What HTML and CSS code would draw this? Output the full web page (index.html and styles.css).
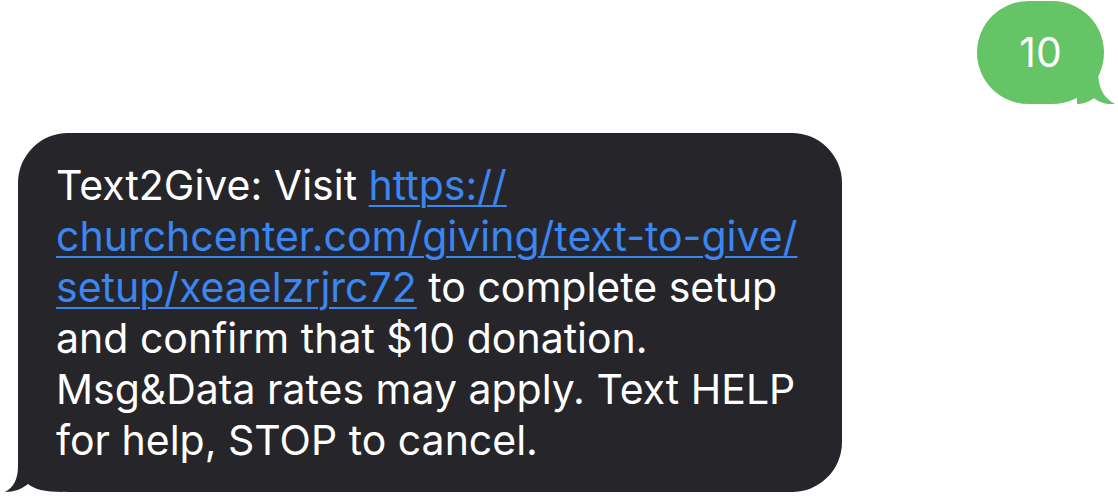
FILE: index.html
```html
<!DOCTYPE html>
<html lang="en">
<head>
    <meta charset="UTF-8">
    <title>Messages</title>
    <link rel="stylesheet" href="styles.css">
</head>
<body>
    <div class="thread">
        <div class="row out">
            <div class="bubble sent">
                <svg class="tail tail-sent" width="40" height="34" viewBox="0 0 40 34">
                    <path d="M0,0 L21,0 C21,16 25,27 38,34 C30,35 21,32 17,28 C11,33 4,34 0,34 Z" />
                </svg>
                <span class="text">10</span>
            </div>
        </div>
        <div class="row in">
            <div class="bubble received">
                <svg class="tail tail-received" width="60" height="50" viewBox="0 0 60 50">
                    <path d="M15,0 L15,24 C15,37 11,45 2,50 C11,50 19,47 25,42 C31,47 41,50 60,50 L60,0 Z" />
                </svg>
                <p class="text">
                    Text2Give: Visit <a href="#">https://</a><br>
                    <a href="#">churchcenter.com/giving/text-to-give/</a><br>
                    <a href="#">setup/xeaelzrjrc72</a> to complete setup<br>
                    and confirm that $10 donation.<br>
                    Msg&amp;Data rates may apply. Text HELP<br>
                    for help, STOP to cancel.
                </p>
            </div>
        </div>
    </div>
</body>
</html>
```

FILE: styles.css
```css
body {
    margin: 0;
    background: #fff;
    font-family: Inter, "Noto Sans", sans-serif;
}
.thread {
    display: flex;
    flex-direction: column;
    padding-top: 1px;
}
.row {
    display: flex;
}
.row.out {
    justify-content: flex-end;
    padding-right: 14px;
}
.row.in {
    justify-content: flex-start;
    padding-left: 18px;
    margin-top: 29px;
}
.bubble {
    position: relative;
    font-size: 41px;
    line-height: 51px;
    color: #fff;
    box-sizing: border-box;
}
.bubble .text {
    position: relative;
    margin: 0;
}
.bubble.sent {
    width: 127px;
    height: 103px;
    padding: 26px 0;
    text-align: center;
    background: #65c466;
    border-radius: 52px;
}
.bubble.received {
    width: 824px;
    height: 359px;
    padding: 27px 38px 26px;
    background: #262529;
    border-radius: 50px;
    white-space: nowrap;
}
.bubble a {
    color: #3a86f2;
    text-decoration: underline;
    text-decoration-thickness: 2px;
    text-underline-offset: 5px;
}
.tail {
    position: absolute;
    bottom: 0;
}
.tail-sent {
    right: -13px;
    fill: #65c466;
}
.tail-received {
    left: -15px;
    fill: #262529;
}
```
